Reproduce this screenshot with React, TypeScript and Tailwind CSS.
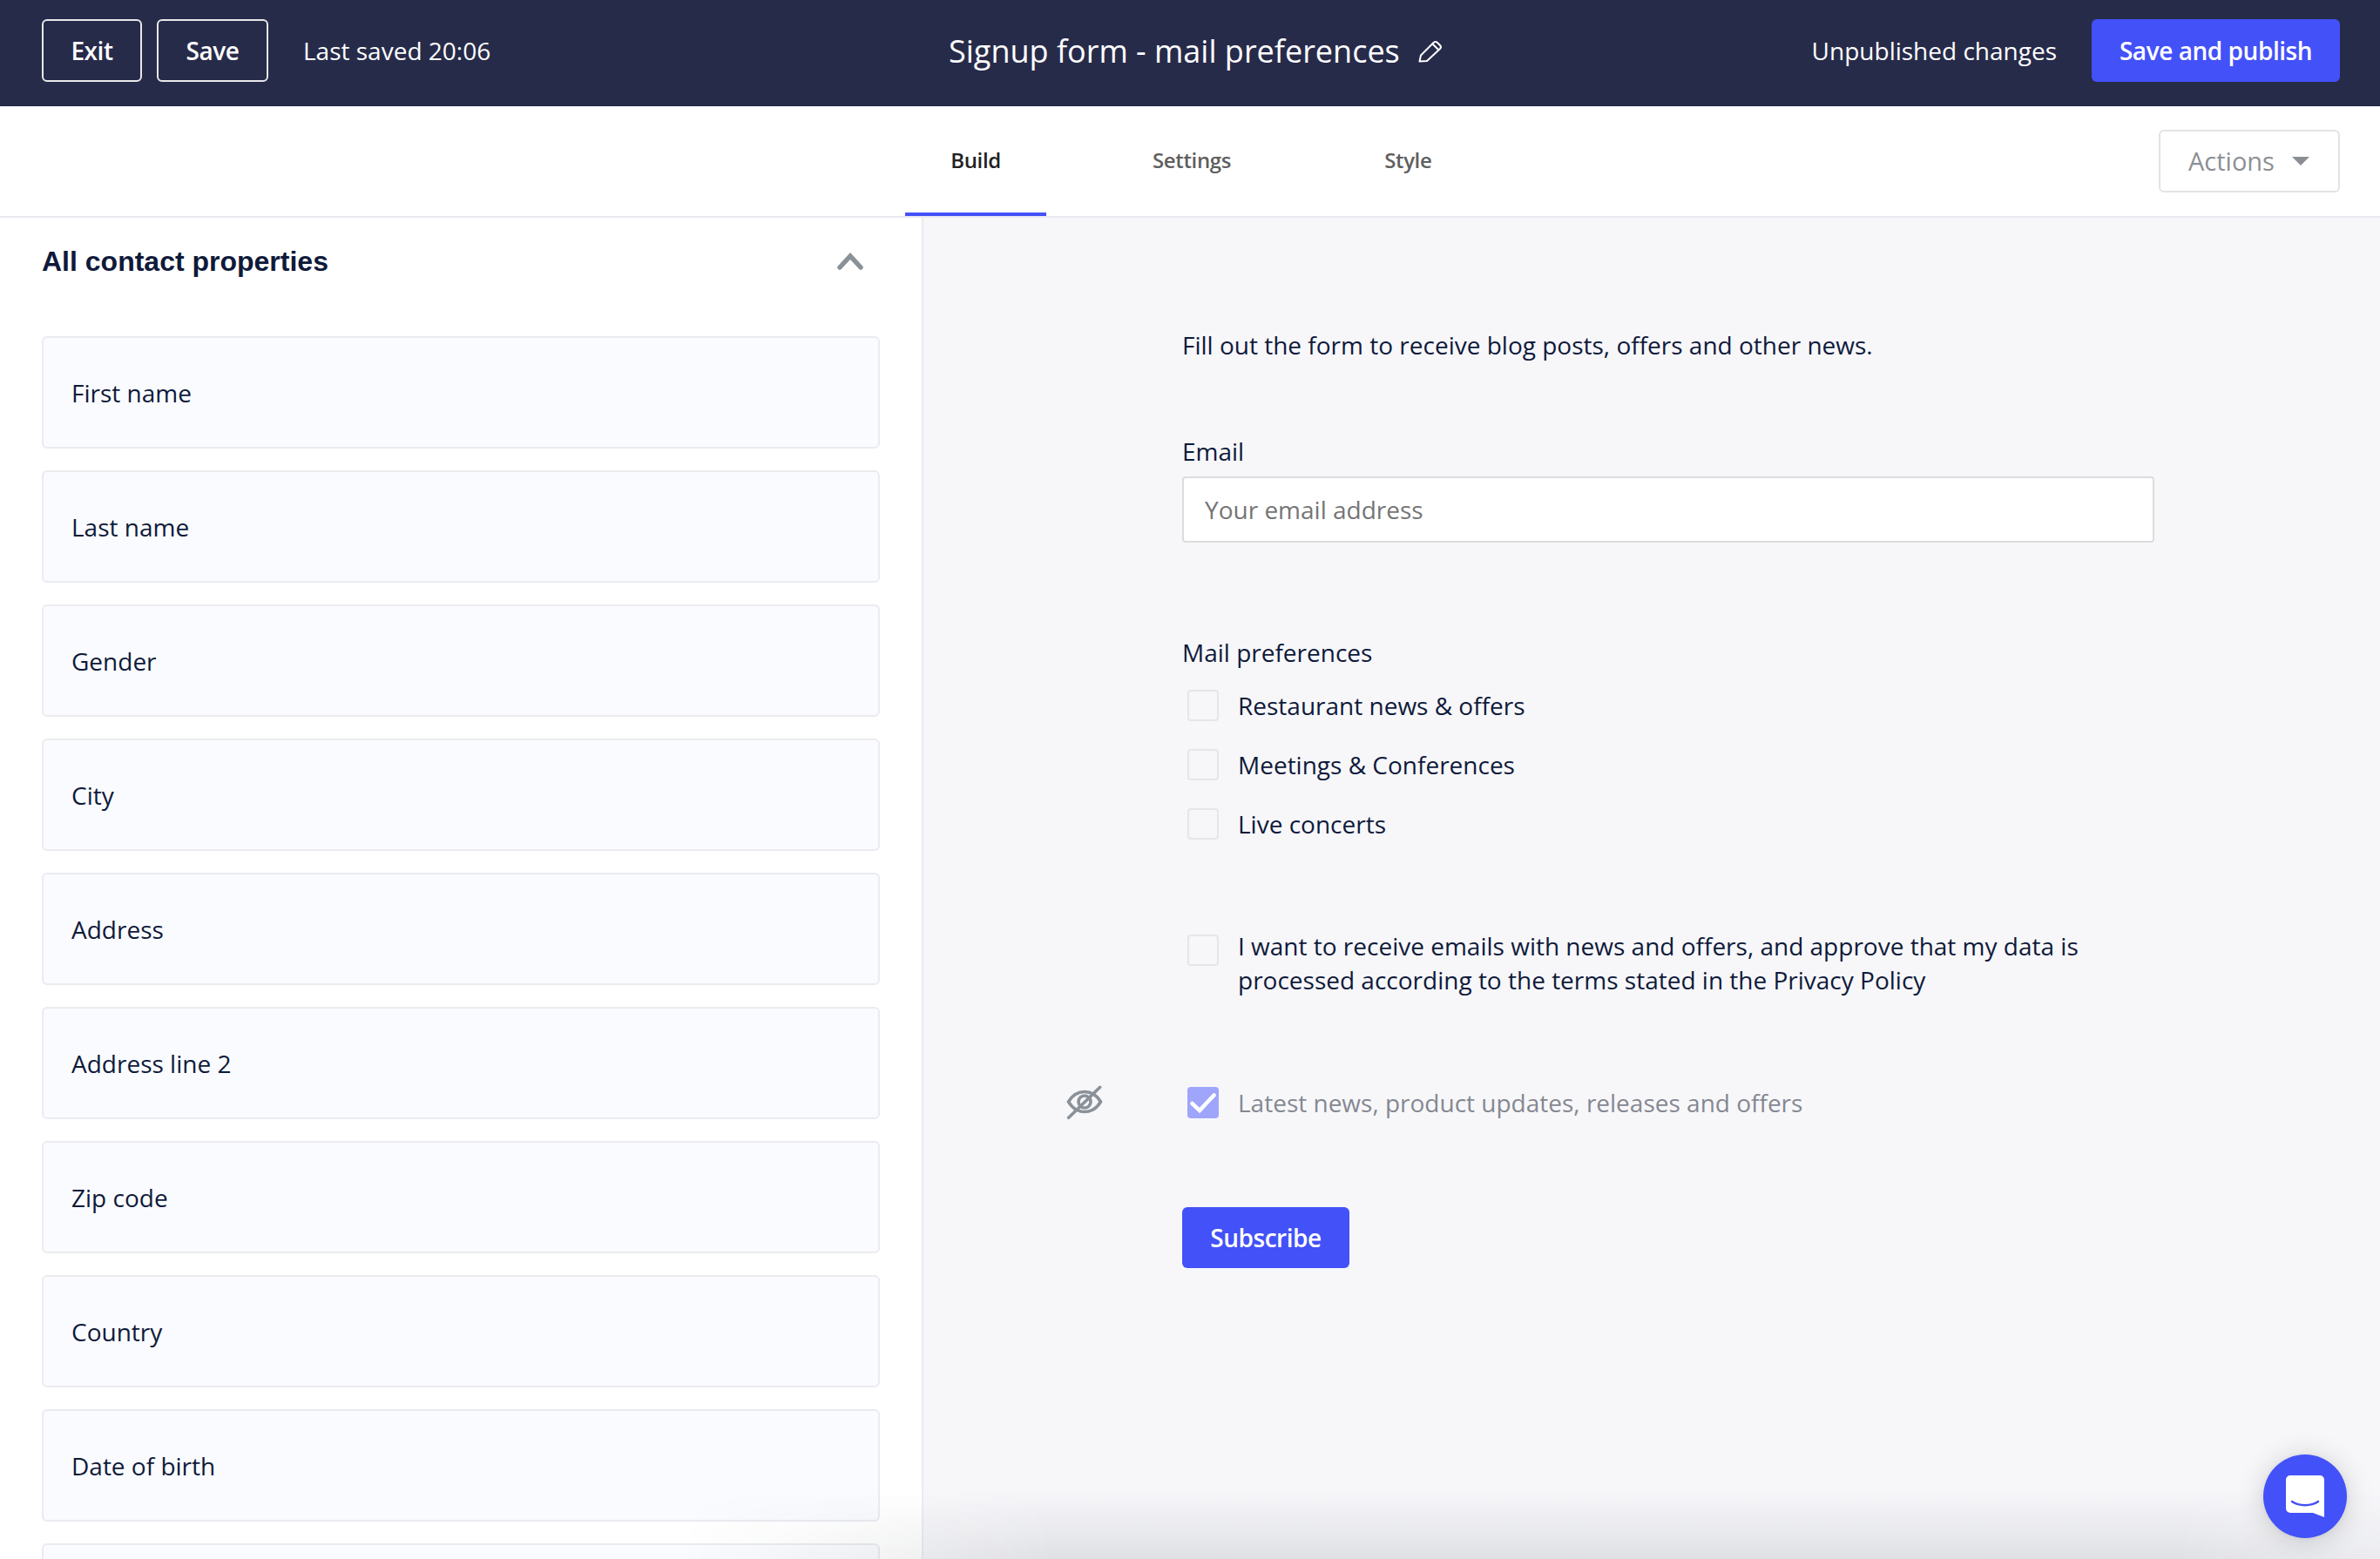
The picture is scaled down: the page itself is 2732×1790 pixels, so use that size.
import React from "react";

const properties = [
  "First name",
  "Last name",
  "Gender",
  "City",
  "Address",
  "Address line 2",
  "Zip code",
  "Country",
  "Date of birth",
  "",
];

const preferences = ["Restaurant news & offers", "Meetings & Conferences", "Live concerts"];

const Box = ({ className = "" }: { className?: string }) => (
  <span className={`block h-[36px] w-[36px] shrink-0 rounded-[4px] border-2 border-[#e6e6ea] ${className}`} />
);

const PencilIcon = () => (
  <svg className="ml-[20px]" width="28" height="28" viewBox="0 0 28 28" fill="none" stroke="#fff" strokeWidth="2" strokeLinejoin="round">
    <path d="M2.500 25.500 4 18.500 18.500 4Q21 2 23 4l3 3q2 2 0 4L11 25z" />
    <path d="M17 5l7 7" />
  </svg>
);

const ChevronIcon = () => (
  <svg width="30" height="20" viewBox="0 0 30 20" fill="none" stroke="#8b9198" strokeWidth="5.500" strokeLinecap="round">
    <path d="M3 17 15 4l12 13" />
  </svg>
);

const HiddenIcon = () => (
  <svg
    className="absolute left-[-134px] top-[-3px]"
    width="44"
    height="42"
    viewBox="0 0 44 42"
    fill="none"
    stroke="#8b9198"
    strokeWidth="3.600"
  >
    <path d="M3.500 20C8 12.500 14.500 8.500 22 8.500S36 12.500 40.500 20C36 27.500 29.500 31.500 22 31.500S8 27.500 3.500 20z" />
    <circle cx="22" cy="20" r="7" />
    <path d="M3.700 38.300 39.700 3.300" strokeLinecap="round" />
  </svg>
);

const TopBar = () => (
  <header className="relative flex h-[122px] shrink-0 items-center justify-between bg-[#272b4a] pb-[6px] pl-[48px] pr-[46px] text-white">
    <div className="flex items-center">
      <button className="h-[72px] w-[115px] rounded-[6px] border-2 border-[#e8e8ea] text-[28px] font-semibold tracking-[-0.45px]">Exit</button>
      <button className="ml-[17px] h-[72px] w-[128px] rounded-[6px] border-2 border-[#e8e8ea] text-[28px] font-semibold tracking-[-0.45px]">Save</button>
      <span className="ml-[40px] text-[28px]">Last saved 20:06</span>
    </div>
    <div className="absolute left-[1089px] top-0 flex h-full items-center pb-[4px]">
      <span className="text-[36px]">Signup form - mail preferences</span>
      <PencilIcon />
    </div>
    <div className="flex items-center">
      <span className="text-[28px]">Unpublished changes</span>
      <button className="ml-[40px] h-[72px] w-[285px] rounded-[6px] bg-[#4351f8] text-[28px] font-semibold tracking-[-0.45px]">Save and publish</button>
    </div>
  </header>
);

const Tabs = () => (
  <nav className="relative flex h-[128px] shrink-0 items-center justify-end border-b-2 border-[#e9e9ef] bg-white pr-[46px]">
    <div className="absolute bottom-0 left-[1039px] flex h-[126px] text-[24px] font-semibold tracking-[-0.35px]">
      <span className="flex w-[162px] justify-center border-b-4 border-[#4351f8] pt-[44px] text-[#222222]">Build</span>
      <span className="ml-[122px] pt-[44px] text-[#5f5f5f]">Settings</span>
      <span className="ml-[176px] pt-[44px] text-[#5f5f5f]">Style</span>
    </div>
    <button className="flex h-[72px] w-[208px] items-center rounded-[6px] border-2 border-[#e2e3e5] pl-[32px] text-[29px] text-[#8b8f94]">
      Actions
      <span className="ml-[20px] h-0 w-0 border-x-[10px] border-t-[10px] border-x-transparent border-t-[#8b8f94]" />
    </button>
  </nav>
);

const PropertiesPanel = () => (
  <aside className="flex w-[1060px] shrink-0 flex-col border-r-2 border-[#ececf1] bg-white px-[48px]">
    <div className="flex h-[136px] shrink-0 items-center justify-between pb-[36px] pr-[19px]">
      <h2 className="font-['Liberation_Sans',sans-serif] text-[32px] font-bold text-[#0f1a3a]">All contact properties</h2>
      <ChevronIcon />
    </div>
    <div className="flex flex-col gap-[25px]">
      {properties.map((name, i) => (
        <div
          key={i}
          className="flex h-[129px] w-[962px] shrink-0 items-center rounded-[6px] border-2 border-[#ebebf0] bg-[#fafbfe] pl-[32px] text-[28px] text-[#0f1a3a]"
        >
          {name}
        </div>
      ))}
    </div>
  </aside>
);

const FormPreview = () => (
  <main className="relative flex-1 bg-[#f7f7fa] pl-[297px] pt-[126px] text-[28px] text-[#0f1a3a]">
    <p className="leading-[40px]">Fill out the form to receive blog posts, offers and other news.</p>

    <label className="mt-[82px] block leading-[40px]">Email</label>
    <div className="mt-[9px] flex h-[76px] w-[1116px] items-center rounded-[4px] border-2 border-[#dcdcdf] bg-white pl-[24px] text-[#757575]">
      Your email address
    </div>

    <div className="mt-[106px] leading-[40px]">Mail preferences</div>
    <ul className="mt-[23px] flex flex-col gap-[32px] pl-[6px]">
      {preferences.map((p) => (
        <li key={p} className="flex h-[36px] items-center gap-[22px]">
          <Box />
          <span>{p}</span>
        </li>
      ))}
    </ul>

    <div className="mt-[103px] flex w-[1040px] gap-[22px] pl-[6px] leading-[39px]">
      <Box className="mt-[6px]" />
      <p>
        I want to receive emails with news and offers, and approve that my data is processed according to the terms
        stated in the Privacy Policy
      </p>
    </div>

    <div className="relative mt-[103px] flex h-[36px] items-center gap-[22px] pl-[6px]">
      <HiddenIcon />
      <span className="block h-[36px] w-[36px] rounded-[4px] bg-[#9fa5fb]">
        <svg width="36" height="36" viewBox="0 0 36 36" fill="none" stroke="#fff" strokeWidth="4.500" strokeLinecap="round">
          <path d="M5.500 19 14 27 30.500 9.500" />
        </svg>
      </span>
      <span className="text-[#858891]">Latest news, product updates, releases and offers</span>
    </div>

    <button className="mt-[102px] h-[70px] w-[192px] rounded-[6px] bg-[#4351f8] font-semibold tracking-[-0.45px] text-white">Subscribe</button>
  </main>
);

const ChatLauncher = () => (
  <>
    <div className="pointer-events-none absolute bottom-0 left-[780px] h-[80px] w-[1952px] bg-[linear-gradient(to_top,rgba(29,39,50,0.1),rgba(29,39,50,0))] [mask-image:linear-gradient(to_right,transparent,black_22%,black_88%,rgba(0,0,0,0.5))]" />
    <div className="absolute bottom-[24px] right-[38px] flex h-[96px] w-[96px] items-center justify-center rounded-full bg-[#4351f8] shadow-[0_1px_6px_rgba(0,0,0,0.06),0_2px_32px_rgba(0,0,0,0.16)]">
      <svg width="44" height="48" viewBox="0 0 44 48">
        <path d="M5 0h34a5 5 0 0 1 5 5v43l-13-5H5a5 5 0 0 1-5-5V5a5 5 0 0 1 5-5z" fill="#fff" />
        <path d="M7 30c8 5.500 22 5.500 30 0" fill="none" stroke="#4351f8" strokeWidth="2.500" strokeLinecap="round" />
      </svg>
    </div>
  </>
);

export default function App() {
  return (
    <div className="relative flex h-[1790px] w-[2732px] flex-col overflow-hidden bg-white font-['Open_Sans',sans-serif]">
      <TopBar />
      <Tabs />
      <div className="flex min-h-0 flex-1">
        <PropertiesPanel />
        <FormPreview />
      </div>
      <ChatLauncher />
    </div>
  );
}
